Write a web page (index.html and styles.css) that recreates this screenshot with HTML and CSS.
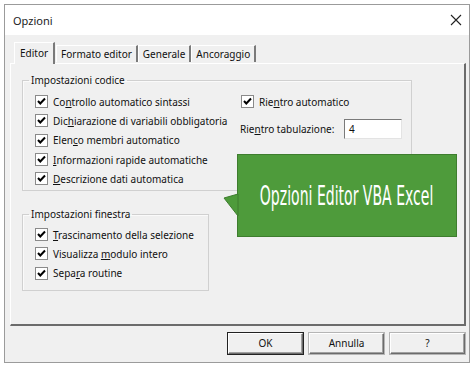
FILE: index.html
```html
<!DOCTYPE html>
<html>
<head>
<meta charset="utf-8">
<link rel="stylesheet" href="styles.css">
</head>
<body>
<div class="window">
  <div class="titlebar">
    <span class="title">Opzioni</span>
    <svg class="close" width="12" height="12" viewBox="0 0 12 12"><path d="M1 1 L11 11 M11 1 L1 11" stroke="#222" stroke-width="1.1" fill="none"/></svg>
  </div>
  <div class="body">
    <div class="tabs">
      <div class="tab active">Editor</div>
      <div class="tab">Formato editor</div>
      <div class="tab">Generale</div>
      <div class="tab">Ancoraggio</div>
    </div>
    <div class="page">
      <fieldset class="group group-code">
        <legend>Impostazioni codice</legend>
        <div class="cols">
          <div class="col-left">
            <div class="row"><span class="cb"><svg width="13" height="13" viewBox="0 0 13 13"><path d="M3 6 L5.3 8.5 L10 3.5" stroke="#000" stroke-width="2" fill="none"/></svg></span><span>Co<u>n</u>trollo automatico sintassi</span></div>
            <div class="row"><span class="cb"><svg width="13" height="13" viewBox="0 0 13 13"><path d="M3 6 L5.3 8.5 L10 3.5" stroke="#000" stroke-width="2" fill="none"/></svg></span><span>Dic<u>h</u>iarazione di variabili obbligatoria</span></div>
            <div class="row"><span class="cb"><svg width="13" height="13" viewBox="0 0 13 13"><path d="M3 6 L5.3 8.5 L10 3.5" stroke="#000" stroke-width="2" fill="none"/></svg></span><span>Elen<u>c</u>o membri automatico</span></div>
            <div class="row"><span class="cb"><svg width="13" height="13" viewBox="0 0 13 13"><path d="M3 6 L5.3 8.5 L10 3.5" stroke="#000" stroke-width="2" fill="none"/></svg></span><span><u>I</u>nformazioni rapide automatiche</span></div>
            <div class="row"><span class="cb"><svg width="13" height="13" viewBox="0 0 13 13"><path d="M3 6 L5.3 8.5 L10 3.5" stroke="#000" stroke-width="2" fill="none"/></svg></span><span><u>D</u>escrizione dati automatica</span></div>
          </div>
          <div class="col-right">
            <div class="row row-auto"><span class="cb"><svg width="13" height="13" viewBox="0 0 13 13"><path d="M3 6 L5.3 8.5 L10 3.5" stroke="#000" stroke-width="2" fill="none"/></svg></span><span>Rie<u>n</u>tro automatico</span></div>
            <div class="row row-tab"><span>Rie<u>n</u>tro tabulazione:</span><span class="input">4</span></div>
          </div>
        </div>
      </fieldset>
      <fieldset class="group group-win">
        <legend>Impostazioni finestra</legend>
        <div class="row"><span class="cb"><svg width="13" height="13" viewBox="0 0 13 13"><path d="M3 6 L5.3 8.5 L10 3.5" stroke="#000" stroke-width="2" fill="none"/></svg></span><span><u>T</u>rascinamento della selezione</span></div>
        <div class="row"><span class="cb"><svg width="13" height="13" viewBox="0 0 13 13"><path d="M3 6 L5.3 8.5 L10 3.5" stroke="#000" stroke-width="2" fill="none"/></svg></span><span>Visualizza <u>m</u>odulo intero</span></div>
        <div class="row"><span class="cb"><svg width="13" height="13" viewBox="0 0 13 13"><path d="M3 6 L5.3 8.5 L10 3.5" stroke="#000" stroke-width="2" fill="none"/></svg></span><span>Sepa<u>r</u>a routine</span></div>
      </fieldset>
      <div class="callout">
        <svg class="tail" width="16" height="26" viewBox="0 0 16 26"><polygon points="15,1 1,5 15,23" fill="#4e9b3b" stroke="#3e7d2e" stroke-width="1"/></svg>
        <span class="callout-text">Opzioni Editor VBA Excel</span>
      </div>
    </div>
    <div class="buttons">
      <div class="btn default">OK</div>
      <div class="btn">Annulla</div>
      <div class="btn">?</div>
    </div>
  </div>
</div>
</body>
</html>
```

FILE: styles.css
```css
* { box-sizing: border-box; }
html, body { margin: 0; padding: 0; background: #ffffff; }
body {
  font-family: "Noto Sans", "Open Sans", sans-serif;
  font-size: 10px;
  color: #111;
}
.window {
  margin: 4px 0 0 4px;
  width: 466px;
  height: 359px;
  border: 1px solid #9b9b9b;
  background: #f0f0f0;
  display: flex;
  flex-direction: column;
}
.titlebar {
  height: 30px;
  background: #ffffff;
  display: flex;
  align-items: center;
  justify-content: space-between;
  padding: 0 7px 0 8px;
  flex: none;
}
.title { font-size: 11px; color: #222; }
.body {
  flex: 1;
  padding: 7px 0 0 5px;
  display: flex;
  flex-direction: column;
}
.tabs {
  display: flex;
  align-items: flex-end;
  height: 21px;
  padding-left: 4px;
  position: relative;
  z-index: 1;
  flex: none;
}
.tab {
  height: 17px;
  padding: 0 4px;
  line-height: 16px;
  border-top: 1px solid #ffffff;
  border-left: 1px solid #ffffff;
  border-right: 2px solid #7a7a7a;
  margin-bottom: 1px;
  white-space: nowrap;
}
.tab.active {
  height: 22px;
  margin-bottom: -1px;
  padding: 0 5px;
  line-height: 20px;
  background: #f0f0f0;
  margin-right: 1px;
}
.page {
  position: relative;
  width: 456px;
  height: 263px;
  flex: none;
  border-top: 1px solid #ffffff;
  border-left: 1px solid #ffffff;
  border-right: 2px solid #6b6b6b;
  border-bottom: 2px solid #6b6b6b;
  padding: 9px 0 0 11px;
}
.group {
  margin: 0;
  border: 1px solid #d0d0d0;
  box-shadow: inset 1px 1px 0 #fafafa;
  padding: 0 0 0 12px;
}
.group legend {
  padding: 0 2px;
  margin-left: -6px;
  line-height: 14px;
  font-size: 10px;
}
.group-code {
  width: 390px;
  height: 118px;
}
.group-win {
  width: 187px;
  height: 84px;
  margin-top: 16px;
  padding-top: 4px;
}
.cols { display: flex; padding-top: 5px; }
.col-left { width: 205px; flex: none; }
.col-right { flex: 1; }
.row {
  height: 19.3px;
  display: flex;
  align-items: center;
  white-space: nowrap;
}
.cb {
  width: 13px;
  height: 13px;
  flex: none;
  margin-right: 5px;
  border: 1px solid #8a8a8a;
  background: #ffffff;
  position: relative;
}
.cb svg { position: absolute; left: -1px; top: -1px; }
.row-auto { padding-left: 1px; }
.row-tab { height: 20px; margin-top: 8px; padding-left: 0; }
.input {
  display: inline-block;
  margin-left: auto;
  margin-right: 9px;
  width: 58px;
  height: 20px;
  line-height: 18px;
  padding-left: 4px;
  background: #ffffff;
  border-top: 1px solid #7a7a7a;
  border-left: 1px solid #7a7a7a;
  border-right: 1px solid #e3e3e3;
  border-bottom: 1px solid #e3e3e3;
}
.callout {
  position: absolute;
  left: 226px;
  top: 90px;
  width: 220px;
  height: 83px;
  background: #4e9b3b;
  border: 1px solid #3e7d2e;
  display: flex;
  align-items: center;
  justify-content: center;
}
.tail {
  position: absolute;
  left: -15px;
  top: 38px;
}
.callout-text {
  font-family: "DejaVu Sans Condensed", "DejaVu Sans", sans-serif;
  font-stretch: condensed;
  color: #ffffff;
  font-size: 26px;
  white-space: nowrap;
  transform: scaleX(0.6);
}
.buttons {
  display: flex;
  justify-content: flex-end;
  gap: 6px;
  padding: 7px 4px 0 0;
}
.btn {
  width: 75px;
  height: 21px;
  line-height: 18px;
  text-align: center;
  background: #f0f0f0;
  border-top: 1px solid #ffffff;
  border-left: 1px solid #ffffff;
  border-right: 1px solid #6b6b6b;
  border-bottom: 1px solid #6b6b6b;
  box-shadow: inset -1px -1px 0 #a0a0a0, 0 0 0 1px #b5b5b5;
}
.btn.default {
  box-shadow: inset -1px -1px 0 #a0a0a0, 0 0 0 1px #222;
}
```
